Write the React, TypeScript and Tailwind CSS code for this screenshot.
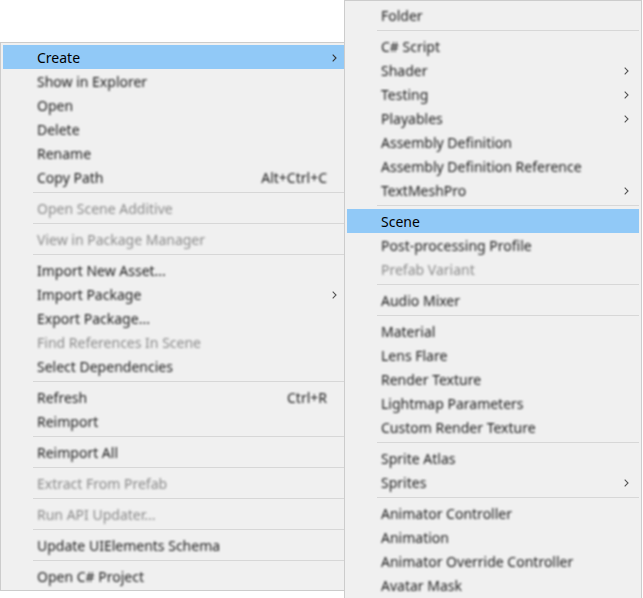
import React from "react";

type Item =
  | { sep: true }
  | { label: string; shortcut?: string; sub?: boolean; disabled?: boolean; active?: boolean };

const S: Item = { sep: true };

const assetMenu: Item[] = [
  { label: "Create", sub: true, active: true },
  { label: "Show in Explorer" },
  { label: "Open" },
  { label: "Delete" },
  { label: "Rename" },
  { label: "Copy Path", shortcut: "Alt+Ctrl+C" },
  S,
  { label: "Open Scene Additive", disabled: true },
  S,
  { label: "View in Package Manager", disabled: true },
  S,
  { label: "Import New Asset..." },
  { label: "Import Package", sub: true },
  { label: "Export Package..." },
  { label: "Find References In Scene", disabled: true },
  { label: "Select Dependencies" },
  S,
  { label: "Refresh", shortcut: "Ctrl+R" },
  { label: "Reimport" },
  S,
  { label: "Reimport All" },
  S,
  { label: "Extract From Prefab", disabled: true },
  S,
  { label: "Run API Updater...", disabled: true },
  S,
  { label: "Update UIElements Schema" },
  S,
  { label: "Open C# Project" },
];

const createMenu: Item[] = [
  { label: "Folder" },
  S,
  { label: "C# Script" },
  { label: "Shader", sub: true },
  { label: "Testing", sub: true },
  { label: "Playables", sub: true },
  { label: "Assembly Definition" },
  { label: "Assembly Definition Reference" },
  { label: "TextMeshPro", sub: true },
  S,
  { label: "Scene", active: true },
  { label: "Post-processing Profile" },
  { label: "Prefab Variant", disabled: true },
  S,
  { label: "Audio Mixer" },
  S,
  { label: "Material" },
  { label: "Lens Flare" },
  { label: "Render Texture" },
  { label: "Lightmap Parameters" },
  { label: "Custom Render Texture" },
  S,
  { label: "Sprite Atlas" },
  { label: "Sprites", sub: true },
  S,
  { label: "Animator Controller" },
  { label: "Animation" },
  { label: "Animator Override Controller" },
  { label: "Avatar Mask" },
];

function Chevron({ sharp }: { sharp: boolean }) {
  return (
    <svg width="5" height="8" viewBox="0 0 5 8" className={sharp ? "" : "blur-[0.7px]"}>
      <polyline points="0.7,0.7 4,4 0.7,7.3" fill="none" stroke={sharp ? "#333" : "#555"} strokeWidth="1.1" />
    </svg>
  );
}

function Menu({ items, className }: { items: Item[]; className: string }) {
  return (
    <div className={`border border-[#cccccc] bg-[#f0f0f0] p-[2px] ${className}`}>
      {items.map((it, i) =>
        "sep" in it ? (
          <div key={i} className="flex h-[7px] items-center pl-[30px]">
            <div className="h-px w-full bg-[#d7d7d7]" />
          </div>
        ) : (
          <div
            key={i}
            className={`flex h-6 items-center pl-[34px] pr-[10px] pt-px ${it.active ? "bg-[#91c9f7]" : ""}`}
          >
            <span
              className={`flex-1 whitespace-nowrap ${
                it.active ? "text-black" : it.disabled ? "text-[#8a8a8a] blur-[0.8px]" : "text-[#1a1a1a] blur-[0.8px]"
              }`}
            >
              {it.label}
            </span>
            {it.shortcut && (
              <span className="mr-[10px] whitespace-nowrap text-[#1a1a1a] blur-[0.8px]">{it.shortcut}</span>
            )}
            {it.sub && <Chevron sharp={!!it.active} />}
          </div>
        )
      )}
    </div>
  );
}

export default function App() {
  return (
    <div
      className="relative h-[598px] w-[643px] overflow-hidden bg-white text-[14px] leading-none"
      style={{ fontFamily: '"Noto Sans", "Open Sans", sans-serif' }}
    >
      <div className="pt-[42px]">
        <Menu items={assetMenu} className="w-[350px]" />
      </div>
      <Menu items={createMenu} className="absolute left-[344px] top-0 w-[298px]" />
    </div>
  );
}
